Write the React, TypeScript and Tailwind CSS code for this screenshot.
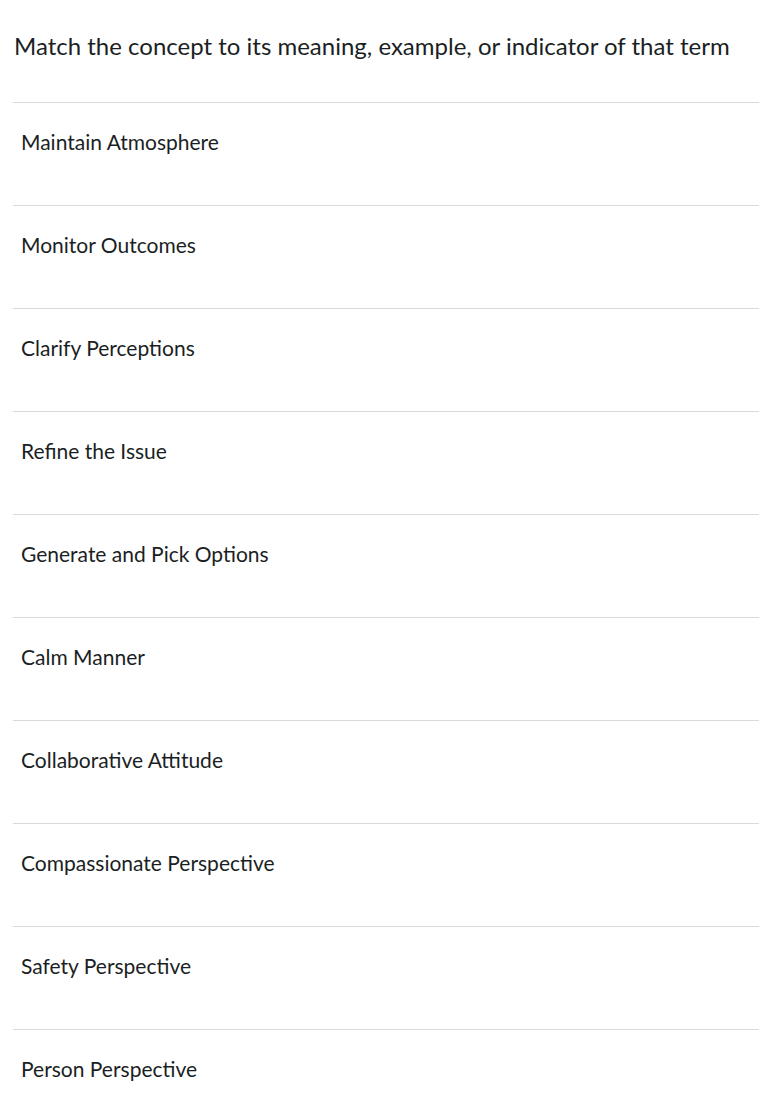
const ITEMS = [
  'Maintain Atmosphere',
  'Monitor Outcomes',
  'Clarify Perceptions',
  'Refine the Issue',
  'Generate and Pick Options',
  'Calm Manner',
  'Collaborative Attitude',
  'Compassionate Perspective',
  'Safety Perspective',
  'Person Perspective',
]

export default function App() {
  return (
    <div className="min-h-[1108px] bg-white pl-[13px] text-[#1b1f24] font-['Lato','Liberation_Sans',sans-serif]">
      <h1 className="pt-[28px] pb-[38px] pl-[1px] text-[24px] leading-[36px] font-normal">
        Match the concept to its meaning, example, or indicator of that term
      </h1>
      <div>
        {ITEMS.map((item) => (
          <div key={item} className="h-[103px] border-t border-[#dadada] pl-[8px] pt-[23px]">
            <span className="text-[21px] leading-[32px]">{item}</span>
          </div>
        ))}
      </div>
    </div>
  )
}
